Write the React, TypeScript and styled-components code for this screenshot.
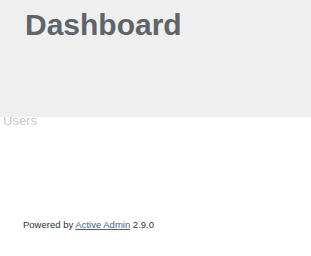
import React from 'react'
import styled, {createGlobalStyle} from 'styled-components'

const GlobalStyle = createGlobalStyle`
  html, body {
    margin: 0;
    padding: 0;
    background: #ffffff;
    font-family: "Liberation Sans", Arial, sans-serif;
  }
`

const Page = styled.div`
  display: flex;
  flex-direction: column;
  width: 311px;
  min-height: 256px;
`

const TitleBar = styled.header`
  height: 117px;
  background: #efefef;
  padding: 8px 25px 0;
  box-sizing: border-box;
  position: relative;
  z-index: 1;

  h2 {
    margin: 0;
    font-size: 30px;
    line-height: 34px;
    font-weight: bold;
    color: #5e6469;
  }
`

const SectionLabel = styled.div`
  margin-top: -4px;
  padding-left: 3px;
  font-size: 13px;
  line-height: 16px;
  color: #c8c8c8;
`

const Footer = styled.footer`
  margin-top: 90px;
  padding-left: 23px;
  font-size: 9.5px;
  line-height: 12px;
  color: #333333;

  a {
    color: #38678b;
    text-decoration: underline;
  }
`

export default function App() {
  return (
    <Page>
      <GlobalStyle />
      <TitleBar>
        <h2>Dashboard</h2>
      </TitleBar>
      <SectionLabel>Users</SectionLabel>
      <Footer>
        Powered by <a href="#">Active Admin</a> 2.9.0
      </Footer>
    </Page>
  )
}
